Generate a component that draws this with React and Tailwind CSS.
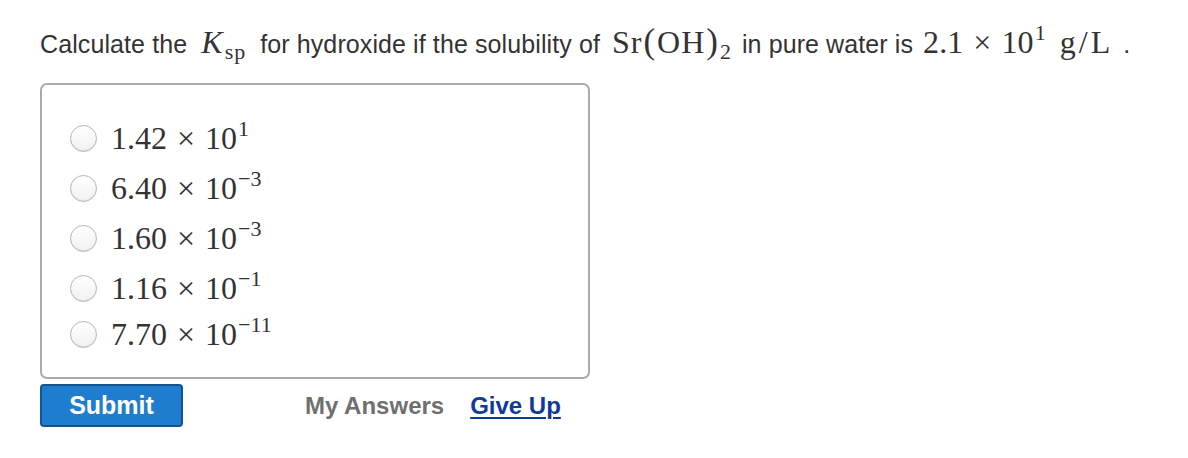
import React from 'react';

const serif = "font-['Liberation_Serif','Times_New_Roman',serif]";

const Sup = ({ children }) => (
  <sup className="text-[22px] relative -top-[13px] ml-[1px] leading-none">{children}</sup>
);

const Sub = ({ children }) => (
  <sub className="text-[22px] relative top-[6px] leading-none">{children}</sub>
);

const Sci = ({ m, e }) => (
  <span className={`${serif} text-[32px] text-[#333] leading-none whitespace-nowrap`}>
    {m}
    <span className="mx-[10px]">×</span>
    10
    <Sup>{e}</Sup>
  </span>
);

const options = [
  { m: '1.42', e: '1' },
  { m: '6.40', e: '−3' },
  { m: '1.60', e: '−3' },
  { m: '1.16', e: '−1' },
  { m: '7.70', e: '−11' },
];

const Radio = () => (
  <span className="inline-block w-[27px] h-[27px] rounded-full border border-[#b5b5b5] bg-gradient-to-b from-white to-[#f1f1f1] shadow-[inset_0_-1px_1px_rgba(0,0,0,0.08)] shrink-0" />
);

export default function App() {
  return (
    <div className="bg-white w-[1188px] h-[458px] pl-[40px] pt-[20px] font-['Liberation_Sans',Arial,sans-serif] text-[#333]">
      <p className="text-[25px] leading-[44px] whitespace-nowrap tracking-[0.1px]">
        Calculate the
        <span className={`${serif} text-[32px] ml-[14px] mr-[14px]`}>
          <i>K</i>
          <Sub>
            <span className="ml-[2px] tracking-[1px]">sp</span>
          </Sub>
        </span>
        for hydroxide if the solubility of
        <span className={`${serif} text-[32px] ml-[12px] mr-[10px] tracking-[1px]`}>
          Sr<span className="text-[35px] mx-[1px]">(</span>OH<span className="text-[35px] mx-[1px]">)</span>
          <Sub>2</Sub>
        </span>
        in pure water is
        <span className={`${serif} text-[32px] ml-[10px] mr-[10px]`}>
          2.1<span className="mx-[10px]">×</span>10
          <Sup>1</Sup>
          <span className="ml-[14px] tracking-[3px]">g/L</span>
        </span>
        .
      </p>

      <div className="mt-[17px] w-[550px] h-[296px] border-2 border-[#aaa] rounded-[7px] pl-[28px] pt-[28px]">
        {options.map((o, i) => (
          <div key={i} className={`flex items-center gap-[14px] ${i === 4 ? 'h-[42px]' : 'h-[50px]'}`}>
            <Radio />
            <Sci m={o.m} e={o.e} />
          </div>
        ))}
      </div>

      <div className="flex items-center mt-[5px]">
        <button className="w-[143px] h-[43px] bg-[#1e7dce] border-2 border-[#10558f] rounded-[4px] text-white font-bold text-[25px]">
          Submit
        </button>
        <span className="ml-[122px] text-[24px] font-bold text-[#6f6f6f]">My Answers</span>
        <a className="ml-[26px] text-[24px] font-bold text-[#0e3a9c] underline decoration-2 underline-offset-[3px]">
          Give Up
        </a>
      </div>
    </div>
  );
}
